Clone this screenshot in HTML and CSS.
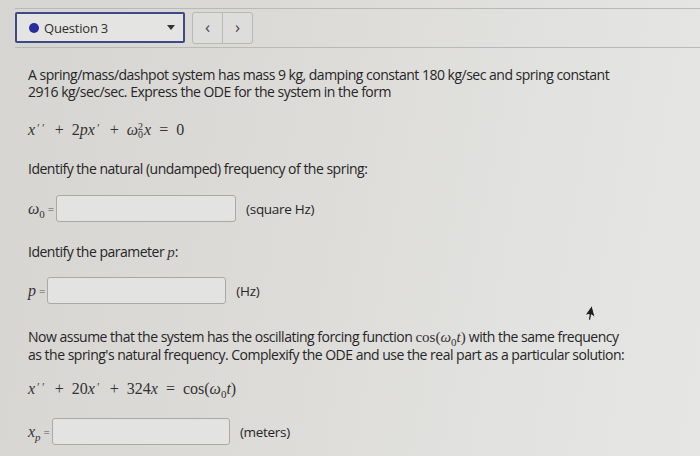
FILE: index.html
```html
<!DOCTYPE html>
<html>
<head>
<meta charset="utf-8">
<link rel="stylesheet" href="styles.css">
</head>
<body>
<div class="page">
  <div class="toolbar">
    <div class="select">
      <span class="dot"></span>
      <span class="select-label">Question 3</span>
      <span class="caret"></span>
    </div>
    <div class="nav">
      <span class="nav-btn">&lsaquo;</span>
      <span class="nav-btn">&rsaquo;</span>
    </div>
  </div>

  <div class="content">
    <p class="text">A spring/mass/dashpot system has mass 9 kg, damping constant 180 kg/sec and spring constant 2916 kg/sec/sec. Express the ODE for the system in the form</p>
    <p class="math eq1"><i>x</i><span class="pr">&prime;&prime;</span> + 2<i>px</i><span class="pr">&prime;</span> + <i>&omega;</i><span class="subsup"><span class="sup">2</span><span class="sub0">0</span></span><i>x</i> = 0</p>

    <p class="text q2">Identify the natural (undamped) frequency of the spring:</p>
    <div class="answer a1">
      <span class="math lbl"><i>&omega;</i><sub>0</sub></span><span class="eq">=</span>
      <span class="box w180"></span>
      <span class="unit">(square Hz)</span>
    </div>

    <p class="text q3">Identify the parameter <i class="math">p</i>:</p>
    <div class="answer a2">
      <span class="math lbl"><i>p</i></span><span class="eq">=</span>
      <span class="box w179"></span>
      <span class="unit">(Hz)</span>
    </div>

    <p class="text q4">Now assume that the system has the oscillating forcing function <span class="math">cos(<i>&omega;</i><sub>0</sub><i>t</i>)</span> with the same frequency as the spring's natural frequency. Complexify the ODE and use the real part as a particular solution:</p>
    <p class="math eq2"><i>x</i><span class="pr">&prime;&prime;</span> + 20<i>x</i><span class="pr">&prime;</span> + 324<i>x</i> = cos(<i>&omega;</i><sub>0</sub><i>t</i>)</p>
    <div class="answer a3">
      <span class="math lbl"><i>x</i><sub><i>p</i></sub></span><span class="eq">=</span>
      <span class="box w178"></span>
      <span class="unit">(meters)</span>
    </div>
  </div>

  <svg class="cursor" width="12" height="16" viewBox="0 0 12 16">
    <path d="M1 1 L1 13 L4 10 L6.5 15 L8.5 14 L6 9 L10.5 9 Z" fill="#1e1e1e" stroke="#f0f0f0" stroke-width="0.8" transform="rotate(35 6 8)"/>
  </svg>
</div>
</body>
</html>
```

FILE: styles.css
```css
html, body {
  margin: 0;
  padding: 0;
}
body {
  width: 700px;
  height: 456px;
  overflow: hidden;
  background: linear-gradient(100deg, #d6d5d1 0%, #dcdbd8 40%, #e2e2e0 75%, #e6e6e5 100%);
  font-family: "Open Sans", "Liberation Sans", sans-serif;
  color: #2b2b2b;
}
.page {
  position: relative;
  height: 456px;
}
.toolbar {
  margin-left: 15px;
  margin-top: 8px;
  padding: 3px 0 4px 0;
  border-top: 1px solid #b9b9b7;
  border-bottom: 1px solid #b9b9b7;
  display: flex;
  align-items: center;
  gap: 7px;
  height: 31px;
}
.select {
  width: 166px;
  height: 27px;
  border: 2px solid #3d4a86;
  border-radius: 2px;
  background: #e4e4e3;
  display: flex;
  align-items: center;
  box-sizing: content-box;
}
.dot {
  width: 10px;
  height: 10px;
  border-radius: 50%;
  background: #2a2c9c;
  margin-left: 12px;
}
.select-label {
  margin-left: 5px;
  font-size: 13px;
  letter-spacing: -0.2px;
  color: #2e2e2e;
  flex: 1;
}
.caret {
  width: 0;
  height: 0;
  border-left: 4px solid transparent;
  border-right: 4px solid transparent;
  border-top: 5px solid #333;
  margin-right: 8px;
}
.nav {
  display: flex;
  border: 1px solid #b8b8b6;
  border-radius: 3px;
  height: 30px;
  background: #dddddb;
}
.nav-btn {
  width: 29px;
  display: flex;
  align-items: center;
  justify-content: center;
  font-size: 17px;
  color: #444;
  line-height: 1;
  padding-bottom: 2px;
}
.nav-btn + .nav-btn {
  border-left: 1px solid #b8b8b6;
}
.content {
  padding-left: 28px;
  width: 600px;
}
.text {
  margin: 0;
  font-size: 14px;
  line-height: 17px;
  letter-spacing: -0.5px;
  color: #262626;
}
.content > .text:first-child {
  margin-top: 18px;
}
.math {
  font-family: "Liberation Serif", "DejaVu Serif", serif;
  font-size: 16px;
  color: #333;
  letter-spacing: 0;
}
.math sub {
  font-size: 11px;
  font-style: normal;
  line-height: 0;
}
.pr {
  font-size: 13px;
  letter-spacing: 2px;
  vertical-align: 3px;
  margin-left: 2px;
  color: #555;
}
.eq1, .eq2 {
  margin: 0;
  word-spacing: 4px;
  line-height: 20px;
}
.eq1 {
  margin-top: 18px;
}
.subsup {
  display: inline-block;
  font-size: 10px;
  line-height: 8px;
  vertical-align: -3px;
  margin-right: 1px;
}
.subsup span {
  display: block;
}
.q2 {
  margin-top: 20px;
}
.answer {
  display: flex;
  align-items: center;
}
.a1 {
  margin-top: 18px;
}
.a2 {
  margin-top: 16px;
}
.a3 {
  margin-top: 19px;
}
.lbl {
  font-size: 16px;
}
.eq {
  font-size: 11px;
  color: #555;
  margin: 0 2px 0 3px;
}
.box {
  height: 25px;
  border: 1px solid #a9a9a7;
  border-radius: 3px;
  background: #e3e3e1;
}
.w180 { width: 178px; }
.w179 { width: 177px; }
.w178 { width: 176px; }
.unit {
  font-size: 13.5px;
  letter-spacing: -0.3px;
  margin-left: 10px;
  color: #262626;
}
.q3 {
  margin-top: 21px;
}
.q3 .math, .q4 .math {
  font-size: 15px;
  line-height: 17px;
}
.q4 {
  margin-top: 24px;
}
.eq2 {
  margin-top: 14px;
}
.cursor {
  position: absolute;
  left: 586px;
  top: 298px;
}
```
